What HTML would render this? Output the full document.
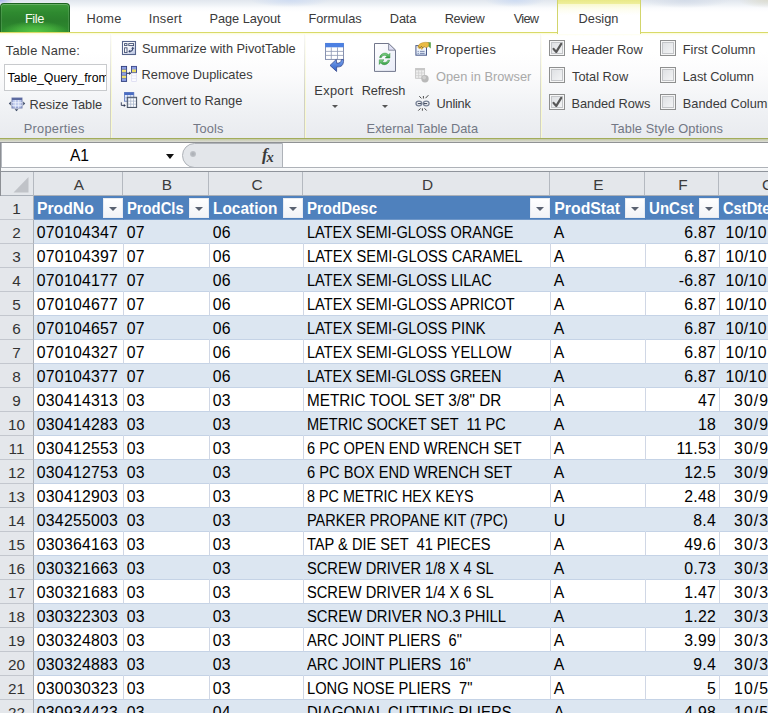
<!DOCTYPE html>
<html><head><meta charset="utf-8"><title>Excel</title>
<style>
html,body{margin:0;padding:0;background:#fff}
#app{position:relative;width:768px;height:713px;overflow:hidden;background:#fff;font-family:"Liberation Sans",sans-serif;font-size:12.8px;color:#3b3b3b}
#app *{box-sizing:border-box}
.abs{position:absolute}
/* top */
#topbg{position:absolute;left:0;top:0;width:768px;height:33px;background:radial-gradient(ellipse 40px 7px at 290px 0,#cfdcf2 0,rgba(207,220,242,0) 100%),radial-gradient(ellipse 30px 7px at 515px 0,#cddbf2 0,rgba(205,219,242,0) 100%),radial-gradient(ellipse 45px 8px at 685px 0,#d3dbe8 0,rgba(211,219,232,0) 100%),radial-gradient(ellipse 30px 8px at 768px 0,#dcdcd0 0,rgba(220,220,208,0) 100%),radial-gradient(ellipse 14px 5px at 0 0,#aab4ee 0,rgba(170,180,238,0) 100%),linear-gradient(#e1e6ee 0,#ecf0f5 4px,#fafbfd 8px,#fff 12px)}
#filetab{position:absolute;left:0;top:3px;width:70px;height:29px;border-radius:4px 4px 0 0;background:radial-gradient(ellipse 34px 11px at 50% 100%,#56c846 0,rgba(86,200,70,.6) 50%,rgba(86,200,70,0) 100%),linear-gradient(#3c9a3a 0,#2f8a30 30%,#2a7f2c 60%,#2e8c2f 100%);border:1px solid #1d6420;border-bottom:none;box-shadow:inset 0 1px 0 rgba(255,255,255,.22),inset 1px 0 0 rgba(255,255,255,.12),inset -1px 0 0 rgba(255,255,255,.12)}
.tab{position:absolute;top:11px;height:16px;line-height:16px;white-space:nowrap;color:#3b3b3b}
#designtab{position:absolute;left:557px;top:0;width:84px;height:34px;border-left:1px solid #d2d56c;border-right:1px solid #d2d56c;background:linear-gradient(#e9e986 0,#eeee9a 3.5px,#f9f9d2 4.5px,#fdfdee 9px,#fff 15px)}
#ribbon{position:absolute;left:0;top:32px;width:768px;height:106px;border-top:1px solid #d9da68;background:linear-gradient(#fbfbd4 0,#fefef2 1.5px,#fff 3px,#fff 18%,#fbfbfc 40%,#eff1f4 75%,#e9ebef 100%)}
#ribshadow{position:absolute;left:0;top:137px;width:768px;height:6px;background:linear-gradient(#e9ebef 0,#e9ebef .6px,#a3ad5a .7px,#a3ad5a 1.7px,#c3c8a4 2px,#d9dad2 4.6px,#909294 4.8px,#909294 5.5px,#fff 5.6px)}
.sep{position:absolute;top:34px;width:2px;height:104px;background:linear-gradient(rgba(255,255,255,.85) 0,rgba(255,255,255,.5) 25%,rgba(255,255,255,0) 60%),linear-gradient(90deg,#cfd0c6 0,#cfd0c6 1px,#f9f9cf 1px,#f9f9cf 2px)}
.lbl{position:absolute;white-space:nowrap;height:16px;line-height:16px;color:#3b3b3b}
.glbl{position:absolute;white-space:nowrap;height:16px;line-height:16px;color:#727784;top:121px}
.dis{color:#a9a9a9}
#tname{position:absolute;left:4px;top:64px;width:103px;height:27px;border:1px solid #c8cacd;background:#fff;color:#000;overflow:hidden;white-space:nowrap;line-height:26px;padding-left:2.6px;font-size:12.3px}
.cb{position:absolute;width:16px;height:16px;border:1px solid #8e8f8f;background:#f6f6f6;padding:1px}
.cb b{display:block;width:12px;height:12px;border:1px solid #c3c5c8;background:linear-gradient(135deg,#dfe1e4,#f3f4f5)}
.cb svg{position:absolute;left:1px;top:1px}
.dd{position:absolute;width:0;height:0;border-left:3px solid transparent;border-right:3px solid transparent;border-top:3px solid #555}
/* formula bar */
#fbar{position:absolute;left:0;top:143px;width:768px;height:29px;background:#fff}
#namebox{position:absolute;left:1px;top:143px;width:181px;height:25px;background:#fff;border-left:1px solid #b5b9bf}
#nameboxtxt{position:absolute;left:0;top:146.5px;width:159px;text-align:center;font-size:15.6px;color:#000;line-height:18px}
#fxpill{position:absolute;left:182px;top:143px;width:101px;height:25px;border:1px solid #aeb2b8;border-radius:13px 0 0 13px;background:#e3e6ea}
#fline{position:absolute;left:0;top:167px;width:768px;height:1px;background:#aeb2b8}
#fgap{position:absolute;left:0;top:168px;width:768px;height:4px;background:linear-gradient(#fafbfc,#eef0f2)}
/* grid */
#grid{position:absolute;left:0;top:0;width:768px;height:713px;font-size:15.8px;color:#000;pointer-events:none}
.colhead{position:absolute;left:0;top:171px;width:768px;height:25px;background:#e4e7eb;border-top:1px solid #8f949b;border-bottom:1px solid #aab0b8}
.corner{position:absolute;left:0;top:0;width:34px;height:24px;border-right:1px solid #b4b9c0}
.ch{position:absolute;top:0;height:23px;line-height:25px;text-align:center;border-right:1px solid #b4b9c0;color:#3c3c3c;font-size:15.4px;padding-left:3px}
.rh{position:absolute;left:0;width:34px;height:24px;line-height:26.4px;text-align:center;background:#e4e7eb;border-right:1px solid #aab0b8;border-bottom:1px solid #c3c7ce;color:#333;font-size:15.3px}
.row{position:absolute;left:34px;width:734px;height:24px}
.row .c{position:absolute;top:0;height:24px;margin-left:-33px;line-height:26.4px;white-space:pre;overflow:hidden;padding-left:2.8px;letter-spacing:.25px;border-right:1px solid #d0d7e5;border-bottom:1px solid #d0d7e5}
.row.b1 .c{background:#dce6f1;border-right-color:#dce6f1;border-bottom-color:#c5d3e6}
.row.b0 .c{background:#fff;border-bottom-color:#c5d3e6}
.row.hdr .c{background:#4f81bd;color:#fff;font-weight:bold;letter-spacing:0;padding-left:3.3px;line-height:25.6px;border-color:#4f81bd;border-bottom-color:#6f97c8}
.row .c.r{text-align:right;padding-right:3px}
.d{display:inline-block;transform:scaleX(.913);transform-origin:0 50%;letter-spacing:0}
.ht{display:inline-block;transform-origin:0 50%}
.fb{position:absolute;right:.5px;top:2px;width:19.5px;height:20px;background:linear-gradient(#fff,#f1f3f6);border:1px solid #e8ecf2}
.fb i{position:absolute;left:5px;top:8px;width:0;height:0;border-left:4px solid transparent;border-right:4px solid transparent;border-top:4px solid #596170}

#leftedge{z-index:5;position:absolute;left:0;top:142px;width:1px;height:54px;background:#8c8f94}

</style></head>
<body>
<div id="app">
<div id="topbg"></div>
<div id="ribbon"></div>
<div id="ribshadow"></div>
<div id="designtab"></div>
<div id="filetab"></div>
<div class="tab" style="left:25px;color:#f4fbf0;letter-spacing:-0.45px">File</div>
<div class="tab" style="left:86.6px;letter-spacing:0.2px">Home</div>
<div class="tab" style="left:148.8px;letter-spacing:0.2px">Insert</div>
<div class="tab" style="left:209.6px;letter-spacing:-0.08px">Page Layout</div>
<div class="tab" style="left:308.4px;letter-spacing:0px">Formulas</div>
<div class="tab" style="left:389.8px;letter-spacing:-0.15px">Data</div>
<div class="tab" style="left:444.7px;letter-spacing:-0.38px">Review</div>
<div class="tab" style="left:513.7px;letter-spacing:-0.7px">View</div>
<div class="tab" style="left:578.6px;letter-spacing:0px">Design</div>
<div class="sep" style="left:110px"></div>
<div class="sep" style="left:304px"></div>
<div class="sep" style="left:540px"></div>
<div class="lbl" style="left:5.8px;top:43px;letter-spacing:0.22px">Table Name:</div>
<div id="tname">Table_Query_from_MS_Access</div>
<div class="lbl" style="left:29.6px;top:97px;letter-spacing:-0.05px">Resize Table</div>
<div class="glbl" style="left:23.8px;letter-spacing:0.24px">Properties</div>
<div class="lbl" style="left:142px;top:41px">Summarize with PivotTable</div>
<div class="lbl" style="left:141.6px;top:67px;letter-spacing:0px">Remove Duplicates</div>
<div class="lbl" style="left:142px;top:93px">Convert to Range</div>
<div class="glbl" style="left:193px;letter-spacing:0.12px">Tools</div>
<div class="lbl" style="left:314.3px;top:83px;letter-spacing:0.34px">Export</div>
<div class="lbl" style="left:361.7px;top:83px;letter-spacing:-0.2px">Refresh</div>
<div class="dd" style="left:332px;top:105px"></div>
<div class="dd" style="left:382px;top:105px"></div>
<div class="lbl" style="left:435.5px;top:42px;letter-spacing:0.22px">Properties</div>
<div class="lbl dis" style="left:436px;top:69px">Open in Browser</div>
<div class="lbl" style="left:436.5px;top:96px;letter-spacing:-0.24px">Unlink</div>
<div class="glbl" style="left:366.6px;letter-spacing:0px">External Table Data</div>
<div class="cb" style="left:549px;top:40px"><b></b><svg width="12" height="12" viewBox="0 0 12 12" style="overflow:visible"><path d="M2.6 6.9 L5.3 9.9 L10.2 1.9" fill="none" stroke="#585858" stroke-width="2.2" stroke-linejoin="round" stroke-linecap="round"/></svg></div>
<div class="cb" style="left:549px;top:67px"><b></b></div>
<div class="cb" style="left:549px;top:94px"><b></b><svg width="12" height="12" viewBox="0 0 12 12" style="overflow:visible"><path d="M2.6 6.9 L5.3 9.9 L10.2 1.9" fill="none" stroke="#585858" stroke-width="2.2" stroke-linejoin="round" stroke-linecap="round"/></svg></div>
<div class="cb" style="left:660px;top:40px"><b></b></div>
<div class="cb" style="left:660px;top:67px"><b></b></div>
<div class="cb" style="left:660px;top:94px"><b></b></div>
<div class="lbl" style="left:571.5px;top:42px;letter-spacing:0px">Header Row</div>
<div class="lbl" style="left:572px;top:69px">Total Row</div>
<div class="lbl" style="left:571.5px;top:96px;letter-spacing:-0.09px">Banded Rows</div>
<div class="lbl" style="left:682.8px;top:42px;letter-spacing:0px">First Column</div>
<div class="lbl" style="left:682.8px;top:69px;letter-spacing:-0.07px">Last Column</div>
<div class="lbl" style="left:682.8px;top:96px;letter-spacing:0px">Banded Columns</div>
<div class="glbl" style="left:611px;letter-spacing:0.09px">Table Style Options</div>
<svg class="abs" style="left:0;top:0" width="768" height="143" viewBox="0 0 768 143">
<defs>
<linearGradient id="gArrow" x1="0" y1="0" x2="0" y2="1"><stop offset="0" stop-color="#7aa4ee"/><stop offset="1" stop-color="#2f5fc4"/></linearGradient>
<linearGradient id="gPage" x1="0" y1="0" x2="1" y2="1"><stop offset="0" stop-color="#ffffff"/><stop offset="1" stop-color="#e9ecf8"/></linearGradient>
<linearGradient id="gPiv" x1="0" y1="0" x2="1" y2="1"><stop offset="0.4" stop-color="#ffffff"/><stop offset="1" stop-color="#b4c0e0"/></linearGradient>
<linearGradient id="gSheet" x1="0" y1="0" x2="0" y2="1"><stop offset="0" stop-color="#ffffff"/><stop offset="1" stop-color="#d6e2f4"/></linearGradient>
<linearGradient id="gGreen" x1="0" y1="0" x2="0" y2="1"><stop offset="0" stop-color="#8ad890"/><stop offset="1" stop-color="#2f9a3f"/></linearGradient>
</defs>
<!-- Resize Table -->
<g>
<rect x="12" y="98" width="10" height="10" fill="#bcc8ec" stroke="#7480b0" stroke-width="1"/>
<rect x="12" y="98" width="10" height="2" fill="#5c6aa0"/>
<path d="M15.3 100v8M18.7 100v8M12 102.7h10M12 105.3h10" stroke="#eef2fb" stroke-width="0.8" fill="none"/>
<path d="M10.8 101.6L8.8 103.5L10.8 105.4Z" fill="#3b4a66"/>
<path d="M23.2 101.6L25.2 103.5L23.2 105.4Z" fill="#3b4a66"/>
<path d="M14.6 109.2L18.4 109.2L16.5 111.2Z" fill="#3b4a66"/>
</g>
<!-- PivotTable -->
<g>
<rect x="122.5" y="41.5" width="13" height="13" fill="url(#gPiv)" stroke="#56648a" stroke-width="1.1"/>
<rect x="124.6" y="43.6" width="2.4" height="2" fill="#fff" stroke="#3f4d70" stroke-width="0.9"/>
<rect x="128.8" y="43.6" width="4.8" height="2" fill="#fff" stroke="#3f4d70" stroke-width="0.9"/>
<rect x="124.6" y="47.8" width="2.4" height="4.8" fill="#fff" stroke="#3f4d70" stroke-width="0.9"/>
<path d="M129.5 51.3 Q132.8 51.3 132.8 48.2" fill="none" stroke="#34436a" stroke-width="1.1"/>
<path d="M131.2 48.8L132.8 46.8L134.4 48.8Z M130.2 49.8L128.2 51.3L130.2 52.9Z" fill="#34436a"/>
</g>
<!-- Remove Duplicates -->
<g>
<rect x="121.4" y="66.4" width="5.2" height="15" fill="#8c9ee2" stroke="#2d3c7c" stroke-width="0.9"/>
<rect x="121.9" y="69.5" width="4.2" height="2.8" fill="#f2e36c"/>
<rect x="121.9" y="75.5" width="4.2" height="2.8" fill="#f2e36c"/>
<path d="M121.4 69.4h5.2M121.4 72.4h5.2M121.4 75.4h5.2M121.4 78.4h5.2" stroke="#4a5a9a" stroke-width="0.5"/>
<path d="M126.8 73.3h3" stroke="#2a3350" stroke-width="1.1"/>
<path d="M129.2 71.6L131.2 73.3L129.2 75Z" fill="#2a3350"/>
<rect x="131.5" y="66.4" width="5" height="6.2" fill="#8c9ee2" stroke="#3a478a" stroke-width="0.9"/>
<rect x="132" y="69.5" width="4" height="2.7" fill="#e8da66"/>
<rect x="131.7" y="73.2" width="4.6" height="8.2" fill="#fbfbff" stroke="#d8d8f0" stroke-width="0.7"/>
<path d="M131.7 75.8h4.6M131.7 78.6h4.6" stroke="#dcdcf0" stroke-width="0.6"/>
</g>
<!-- Convert to Range -->
<g>
<rect x="124.4" y="92.6" width="9.4" height="8.6" fill="#dfe8f8" stroke="#5a74b8" stroke-width="0.8"/>
<rect x="124.4" y="92.4" width="9.4" height="2.6" fill="#4a6cc2"/>
<path d="M127.5 95v6M130.6 95v6M124.4 97.8h9.4" stroke="#8fa6d8" stroke-width="0.7"/>
<rect x="127.3" y="97.3" width="9.3" height="10.2" fill="#a9b6cc" stroke="#4c5666" stroke-width="1"/>
<g fill="#fff"><rect x="128.4" y="98.5" width="2" height="2.2"/><rect x="131.2" y="98.5" width="2" height="2.2"/><rect x="134" y="98.5" width="1.8" height="2.2"/>
<rect x="128.4" y="101.5" width="2" height="2.2"/><rect x="131.2" y="101.5" width="2" height="2.2"/><rect x="134" y="101.5" width="1.8" height="2.2"/>
<rect x="128.4" y="104.5" width="2" height="2.2"/><rect x="131.2" y="104.5" width="2" height="2.2"/><rect x="134" y="104.5" width="1.8" height="2.2"/></g>
<path d="M121.3 102.3V105.4H124.3" fill="none" stroke="#2a3350" stroke-width="0.9"/>
<path d="M123.8 103.9L125.8 105.4L123.8 106.9Z" fill="#2a3350"/>
</g>
<!-- Export -->
<g>
<rect x="325.5" y="43.4" width="18" height="16" fill="#fff" stroke="#7a86a8" stroke-width="0.9"/>
<rect x="325.2" y="43" width="18.6" height="4.3" fill="#4c80e2"/>
<path d="M331.3 47.3v12.2M337.5 47.3v12.2M325.5 51.4h18M325.5 55.4h18" stroke="#8e98b4" stroke-width="0.8"/>
<path d="M343.6 59.6 C343.6 65.6 341.5 67 336.6 67 L336.6 71.5 L330 65.4 L336.3 59.4 L336.6 63.2 C340 63.2 341 62.4 341.4 59.6 Z" fill="url(#gArrow)" stroke="#2b3c84" stroke-width="0.7"/>
</g>
<!-- Refresh -->
<g>
<path d="M374.5 43.5H388.6L395.5 50.2V71.4H374.5Z" fill="url(#gPage)" stroke="#72778c" stroke-width="1"/>
<path d="M388.6 43.5V50.2H395.5Z" fill="#dfe0f4" stroke="#72778c" stroke-width="0.8"/>
<path d="M379.6 57.6 C380.4 53 386.4 51.6 388.6 55 L389.9 53.4 L389.9 58 L385.2 58 L386.8 56.4 C385.2 54.6 382 55.2 381.4 57.6 Z" fill="url(#gGreen)" stroke="#2c8a3a" stroke-width="0.5"/>
<path d="M389.6 60.2 C388.8 64.8 382.8 66.2 380.6 62.8 L379.3 64.4 L379.3 59.8 L384 59.8 L382.4 61.4 C384 63.2 387.2 62.6 387.8 60.2 Z" fill="url(#gGreen)" stroke="#2c8a3a" stroke-width="0.5"/>
</g>
<!-- Properties -->
<g>
<rect x="415.9" y="45.6" width="10.6" height="9.6" fill="url(#gSheet)" stroke="#4b5b8a" stroke-width="1"/>
<path d="M417.6 51.4h1.2M420 51.4h4.6M417.6 53.4h1.2M420 53.4h4.6" stroke="#61709a" stroke-width="0.8"/>
<path d="M427.6 42.2L430.8 42.2L430.8 48.4L428.4 46.6Z" fill="#5aa24a"/>
<path d="M418.4 45.2 C420 43 424.5 41.6 428.4 42.6 C429.4 44.2 429 46.4 427.4 47.2 C425.6 47.9 424.8 47.4 424 46.6 L421.8 49.6 L420.4 48 L419.2 48.8 L417.8 47.2 Z" fill="#e9bb45" stroke="#a97c1e" stroke-width="0.4"/>
<path d="M418.6 46.4L420 47.8L421.4 46.4L422.8 47.8L424 46.6" fill="none" stroke="#5a4a2a" stroke-width="0.6"/>
</g>
<!-- Open in browser (disabled) -->
<g>
<rect x="415.6" y="68.5" width="9" height="9.8" fill="#eeeeee" stroke="#c6c6c6" stroke-width="0.9"/>
<rect x="415.6" y="68.3" width="9" height="2" fill="#c6c6c6"/>
<path d="M418.6 70.3v8M421.6 70.3v8M415.6 73h9M415.6 75.6h9" stroke="#cdcdcd" stroke-width="0.7"/>
<circle cx="425" cy="78.7" r="3.7" fill="#b9b9b9"/>
<circle cx="424.2" cy="77.6" r="1.8" fill="#cfcfcf"/>
</g>
<!-- Unlink -->
<g fill="none">
<ellipse cx="418.9" cy="103.5" rx="2.9" ry="2.4" stroke="#7a8498" stroke-width="1.3"/>
<ellipse cx="426.2" cy="103.5" rx="2.9" ry="2.4" stroke="#7a8498" stroke-width="1.3"/>
<path d="M417.8 103.6h3.4M423.8 103.6h3.4" stroke="#3a4252" stroke-width="1"/>
<path d="M419.3 96.2L421.4 98.4M423.4 96V98.5M428.4 95.2L425.5 98.2M418.3 110.6L420.5 108.4M422.4 108.4V110.7M424.5 108.3L426.6 110.5" stroke="#333" stroke-width="0.9"/>
</g>
</svg>

<div id="fbar"></div>
<div id="namebox"></div>
<div id="nameboxtxt">A1</div>
<div class="dd" style="left:166px;top:153.5px;border-left-width:4.5px;border-right-width:4.5px;border-top:5px solid #111"></div>
<div id="fxpill"></div>
<div class="abs" style="left:262px;top:144px;font-family:'Liberation Serif',serif;font-style:italic;font-weight:bold;font-size:17px;color:#3a3a3a;line-height:22px;letter-spacing:-1.2px;white-space:nowrap">f<span style="font-size:14.5px;position:relative;top:1.5px">x</span></div>
<div class="abs" style="left:190px;top:151px;width:6px;height:6px;border-radius:3px;background:radial-gradient(#a9adb3,#c9ccd1)"></div>
<div id="fline"></div>
<div id="fgap"></div>
<div id="leftedge"></div>

<div id="grid">
<div class="colhead">
<div class="corner"><svg width="33" height="24" viewBox="0 0 33 24"><polygon points="28.5,5 28.5,20.5 13.5,20.5" fill="#c0c3c8"/></svg></div>
<div class="ch" style="left:33px;width:90px">A</div>
<div class="ch" style="left:123px;width:86px">B</div>
<div class="ch" style="left:209px;width:94px">C</div>
<div class="ch" style="left:303px;width:247px">D</div>
<div class="ch" style="left:550px;width:95px">E</div>
<div class="ch" style="left:645px;width:74px">F</div>
<div class="ch" style="left:719px;width:96px">G</div>
</div>
<div class="rh" style="top:196px">1</div>
<div class="row hdr" style="top:196px">
<div class="c" style="left:33px;width:90px"><span class="ht" style="transform:scaleX(0.995)">ProdNo</span><span class="fb"><i></i></span></div>
<div class="c" style="left:123px;width:86px"><span class="ht" style="transform:scaleX(0.935)">ProdCls</span><span class="fb"><i></i></span></div>
<div class="c" style="left:209px;width:94px"><span class="ht" style="transform:scaleX(0.977)">Location</span><span class="fb"><i></i></span></div>
<div class="c" style="left:303px;width:247px"><span class="ht" style="transform:scaleX(0.95)">ProdDesc</span><span class="fb"><i></i></span></div>
<div class="c" style="left:550px;width:95px"><span class="ht" style="transform:scaleX(1.0)">ProdStat</span><span class="fb"><i></i></span></div>
<div class="c" style="left:645px;width:74px"><span class="ht" style="transform:scaleX(0.955)">UnCst</span><span class="fb"><i></i></span></div>
<div class="c" style="left:719px;width:96px"><span class="ht" style="transform:scaleX(0.93)">CstDte</span></div>
</div>
<div class="rh" style="top:220px">2</div>
<div class="row b1" style="top:220px">
<div class="c" style="left:33px;width:90px">070104347</div>
<div class="c" style="left:123px;width:86px">07</div>
<div class="c" style="left:209px;width:94px">06</div>
<div class="c" style="left:303px;width:247px"><span class="d" style="transform:scaleX(0.9202)">LATEX SEMI-GLOSS ORANGE</span></div>
<div class="c" style="left:550px;width:95px">A</div>
<div class="c r" style="left:645px;width:74px">6.87</div>
<div class="c g" style="left:719px;width:96px;padding-left:5.5px;letter-spacing:0.35px">10/10</div>
</div>
<div class="rh" style="top:244px">3</div>
<div class="row b0" style="top:244px">
<div class="c" style="left:33px;width:90px">070104397</div>
<div class="c" style="left:123px;width:86px">07</div>
<div class="c" style="left:209px;width:94px">06</div>
<div class="c" style="left:303px;width:247px"><span class="d" style="transform:scaleX(0.9276)">LATEX SEMI-GLOSS CARAMEL</span></div>
<div class="c" style="left:550px;width:95px">A</div>
<div class="c r" style="left:645px;width:74px">6.87</div>
<div class="c g" style="left:719px;width:96px;padding-left:5.5px;letter-spacing:0.35px">10/10</div>
</div>
<div class="rh" style="top:268px">4</div>
<div class="row b1" style="top:268px">
<div class="c" style="left:33px;width:90px">070104177</div>
<div class="c" style="left:123px;width:86px">07</div>
<div class="c" style="left:209px;width:94px">06</div>
<div class="c" style="left:303px;width:247px"><span class="d" style="transform:scaleX(0.9240)">LATEX SEMI-GLOSS LILAC</span></div>
<div class="c" style="left:550px;width:95px">A</div>
<div class="c r" style="left:645px;width:74px">-6.87</div>
<div class="c g" style="left:719px;width:96px;padding-left:5.5px;letter-spacing:0.35px">10/10</div>
</div>
<div class="rh" style="top:292px">5</div>
<div class="row b0" style="top:292px">
<div class="c" style="left:33px;width:90px">070104677</div>
<div class="c" style="left:123px;width:86px">07</div>
<div class="c" style="left:209px;width:94px">06</div>
<div class="c" style="left:303px;width:247px"><span class="d" style="transform:scaleX(0.9219)">LATEX SEMI-GLOSS APRICOT</span></div>
<div class="c" style="left:550px;width:95px">A</div>
<div class="c r" style="left:645px;width:74px">6.87</div>
<div class="c g" style="left:719px;width:96px;padding-left:5.5px;letter-spacing:0.35px">10/10</div>
</div>
<div class="rh" style="top:316px">6</div>
<div class="row b1" style="top:316px">
<div class="c" style="left:33px;width:90px">070104657</div>
<div class="c" style="left:123px;width:86px">07</div>
<div class="c" style="left:209px;width:94px">06</div>
<div class="c" style="left:303px;width:247px"><span class="d" style="transform:scaleX(0.9254)">LATEX SEMI-GLOSS PINK</span></div>
<div class="c" style="left:550px;width:95px">A</div>
<div class="c r" style="left:645px;width:74px">6.87</div>
<div class="c g" style="left:719px;width:96px;padding-left:5.5px;letter-spacing:0.35px">10/10</div>
</div>
<div class="rh" style="top:340px">7</div>
<div class="row b0" style="top:340px">
<div class="c" style="left:33px;width:90px">070104327</div>
<div class="c" style="left:123px;width:86px">07</div>
<div class="c" style="left:209px;width:94px">06</div>
<div class="c" style="left:303px;width:247px"><span class="d" style="transform:scaleX(0.9230)">LATEX SEMI-GLOSS YELLOW</span></div>
<div class="c" style="left:550px;width:95px">A</div>
<div class="c r" style="left:645px;width:74px">6.87</div>
<div class="c g" style="left:719px;width:96px;padding-left:5.5px;letter-spacing:0.35px">10/10</div>
</div>
<div class="rh" style="top:364px">8</div>
<div class="row b1" style="top:364px">
<div class="c" style="left:33px;width:90px">070104377</div>
<div class="c" style="left:123px;width:86px">07</div>
<div class="c" style="left:209px;width:94px">06</div>
<div class="c" style="left:303px;width:247px"><span class="d" style="transform:scaleX(0.9168)">LATEX SEMI-GLOSS GREEN</span></div>
<div class="c" style="left:550px;width:95px">A</div>
<div class="c r" style="left:645px;width:74px">6.87</div>
<div class="c g" style="left:719px;width:96px;padding-left:5.5px;letter-spacing:0.35px">10/10</div>
</div>
<div class="rh" style="top:388px">9</div>
<div class="row b0" style="top:388px">
<div class="c" style="left:33px;width:90px">030414313</div>
<div class="c" style="left:123px;width:86px">03</div>
<div class="c" style="left:209px;width:94px">03</div>
<div class="c" style="left:303px;width:247px"><span class="d" style="transform:scaleX(0.9673)">METRIC TOOL SET 3/8" DR</span></div>
<div class="c" style="left:550px;width:95px">A</div>
<div class="c r" style="left:645px;width:74px">47</div>
<div class="c g" style="left:719px;width:96px;padding-left:14px;letter-spacing:1.1px">30/9</div>
</div>
<div class="rh" style="top:412px">10</div>
<div class="row b1" style="top:412px">
<div class="c" style="left:33px;width:90px">030414283</div>
<div class="c" style="left:123px;width:86px">03</div>
<div class="c" style="left:209px;width:94px">03</div>
<div class="c" style="left:303px;width:247px"><span class="d" style="transform:scaleX(0.9205)">METRIC SOCKET SET  11 PC</span></div>
<div class="c" style="left:550px;width:95px">A</div>
<div class="c r" style="left:645px;width:74px">18</div>
<div class="c g" style="left:719px;width:96px;padding-left:14px;letter-spacing:1.1px">30/9</div>
</div>
<div class="rh" style="top:436px">11</div>
<div class="row b0" style="top:436px">
<div class="c" style="left:33px;width:90px">030412553</div>
<div class="c" style="left:123px;width:86px">03</div>
<div class="c" style="left:209px;width:94px">03</div>
<div class="c" style="left:303px;width:247px"><span class="d" style="transform:scaleX(0.9233)">6 PC OPEN END WRENCH SET</span></div>
<div class="c" style="left:550px;width:95px">A</div>
<div class="c r" style="left:645px;width:74px">11.53</div>
<div class="c g" style="left:719px;width:96px;padding-left:14px;letter-spacing:1.1px">30/9</div>
</div>
<div class="rh" style="top:460px">12</div>
<div class="row b1" style="top:460px">
<div class="c" style="left:33px;width:90px">030412753</div>
<div class="c" style="left:123px;width:86px">03</div>
<div class="c" style="left:209px;width:94px">03</div>
<div class="c" style="left:303px;width:247px"><span class="d" style="transform:scaleX(0.9275)">6 PC BOX END WRENCH SET</span></div>
<div class="c" style="left:550px;width:95px">A</div>
<div class="c r" style="left:645px;width:74px">12.5</div>
<div class="c g" style="left:719px;width:96px;padding-left:14px;letter-spacing:1.1px">30/9</div>
</div>
<div class="rh" style="top:484px">13</div>
<div class="row b0" style="top:484px">
<div class="c" style="left:33px;width:90px">030412903</div>
<div class="c" style="left:123px;width:86px">03</div>
<div class="c" style="left:209px;width:94px">03</div>
<div class="c" style="left:303px;width:247px"><span class="d" style="transform:scaleX(0.9086)">8 PC METRIC HEX KEYS</span></div>
<div class="c" style="left:550px;width:95px">A</div>
<div class="c r" style="left:645px;width:74px">2.48</div>
<div class="c g" style="left:719px;width:96px;padding-left:14px;letter-spacing:1.1px">30/9</div>
</div>
<div class="rh" style="top:508px">14</div>
<div class="row b1" style="top:508px">
<div class="c" style="left:33px;width:90px">034255003</div>
<div class="c" style="left:123px;width:86px">03</div>
<div class="c" style="left:209px;width:94px">03</div>
<div class="c" style="left:303px;width:247px"><span class="d" style="transform:scaleX(0.9194)">PARKER PROPANE KIT (7PC)</span></div>
<div class="c" style="left:550px;width:95px">U</div>
<div class="c r" style="left:645px;width:74px">8.4</div>
<div class="c g" style="left:719px;width:96px;padding-left:14px;letter-spacing:1.1px">30/3</div>
</div>
<div class="rh" style="top:532px">15</div>
<div class="row b0" style="top:532px">
<div class="c" style="left:33px;width:90px">030364163</div>
<div class="c" style="left:123px;width:86px">03</div>
<div class="c" style="left:209px;width:94px">03</div>
<div class="c" style="left:303px;width:247px"><span class="d" style="transform:scaleX(0.9242)">TAP &amp; DIE SET  41 PIECES</span></div>
<div class="c" style="left:550px;width:95px">A</div>
<div class="c r" style="left:645px;width:74px">49.6</div>
<div class="c g" style="left:719px;width:96px;padding-left:14px;letter-spacing:1.1px">30/3</div>
</div>
<div class="rh" style="top:556px">16</div>
<div class="row b1" style="top:556px">
<div class="c" style="left:33px;width:90px">030321663</div>
<div class="c" style="left:123px;width:86px">03</div>
<div class="c" style="left:209px;width:94px">03</div>
<div class="c" style="left:303px;width:247px"><span class="d" style="transform:scaleX(0.9280)">SCREW DRIVER 1/8 X 4 SL</span></div>
<div class="c" style="left:550px;width:95px">A</div>
<div class="c r" style="left:645px;width:74px">0.73</div>
<div class="c g" style="left:719px;width:96px;padding-left:14px;letter-spacing:1.1px">30/3</div>
</div>
<div class="rh" style="top:580px">17</div>
<div class="row b0" style="top:580px">
<div class="c" style="left:33px;width:90px">030321683</div>
<div class="c" style="left:123px;width:86px">03</div>
<div class="c" style="left:209px;width:94px">03</div>
<div class="c" style="left:303px;width:247px"><span class="d" style="transform:scaleX(0.9280)">SCREW DRIVER 1/4 X 6 SL</span></div>
<div class="c" style="left:550px;width:95px">A</div>
<div class="c r" style="left:645px;width:74px">1.47</div>
<div class="c g" style="left:719px;width:96px;padding-left:14px;letter-spacing:1.1px">30/3</div>
</div>
<div class="rh" style="top:604px">18</div>
<div class="row b1" style="top:604px">
<div class="c" style="left:33px;width:90px">030322303</div>
<div class="c" style="left:123px;width:86px">03</div>
<div class="c" style="left:209px;width:94px">03</div>
<div class="c" style="left:303px;width:247px"><span class="d" style="transform:scaleX(0.9366)">SCREW DRIVER NO.3 PHILL</span></div>
<div class="c" style="left:550px;width:95px">A</div>
<div class="c r" style="left:645px;width:74px">1.22</div>
<div class="c g" style="left:719px;width:96px;padding-left:14px;letter-spacing:1.1px">30/3</div>
</div>
<div class="rh" style="top:628px">19</div>
<div class="row b0" style="top:628px">
<div class="c" style="left:33px;width:90px">030324803</div>
<div class="c" style="left:123px;width:86px">03</div>
<div class="c" style="left:209px;width:94px">03</div>
<div class="c" style="left:303px;width:247px"><span class="d" style="transform:scaleX(0.9287)">ARC JOINT PLIERS  6"</span></div>
<div class="c" style="left:550px;width:95px">A</div>
<div class="c r" style="left:645px;width:74px">3.99</div>
<div class="c g" style="left:719px;width:96px;padding-left:14px;letter-spacing:1.1px">30/3</div>
</div>
<div class="rh" style="top:652px">20</div>
<div class="row b1" style="top:652px">
<div class="c" style="left:33px;width:90px">030324883</div>
<div class="c" style="left:123px;width:86px">03</div>
<div class="c" style="left:209px;width:94px">03</div>
<div class="c" style="left:303px;width:247px"><span class="d" style="transform:scaleX(0.9336)">ARC JOINT PLIERS  16"</span></div>
<div class="c" style="left:550px;width:95px">A</div>
<div class="c r" style="left:645px;width:74px">9.4</div>
<div class="c g" style="left:719px;width:96px;padding-left:14px;letter-spacing:1.1px">30/3</div>
</div>
<div class="rh" style="top:676px">21</div>
<div class="row b0" style="top:676px">
<div class="c" style="left:33px;width:90px">030030323</div>
<div class="c" style="left:123px;width:86px">03</div>
<div class="c" style="left:209px;width:94px">03</div>
<div class="c" style="left:303px;width:247px"><span class="d" style="transform:scaleX(0.9311)">LONG NOSE PLIERS  7"</span></div>
<div class="c" style="left:550px;width:95px">A</div>
<div class="c r" style="left:645px;width:74px">5</div>
<div class="c g" style="left:719px;width:96px;padding-left:14px;letter-spacing:1.1px">10/5</div>
</div>
<div class="rh" style="top:700px">22</div>
<div class="row b1" style="top:700px">
<div class="c" style="left:33px;width:90px">030934423</div>
<div class="c" style="left:123px;width:86px">03</div>
<div class="c" style="left:209px;width:94px">04</div>
<div class="c" style="left:303px;width:247px"><span class="d" style="transform:scaleX(0.9466)">DIAGONAL CUTTING PLIERS</span></div>
<div class="c" style="left:550px;width:95px">A</div>
<div class="c r" style="left:645px;width:74px">4.98</div>
<div class="c g" style="left:719px;width:96px;padding-left:14px;letter-spacing:1.1px">10/5</div>
</div>
</div>
</div>
</body></html>
